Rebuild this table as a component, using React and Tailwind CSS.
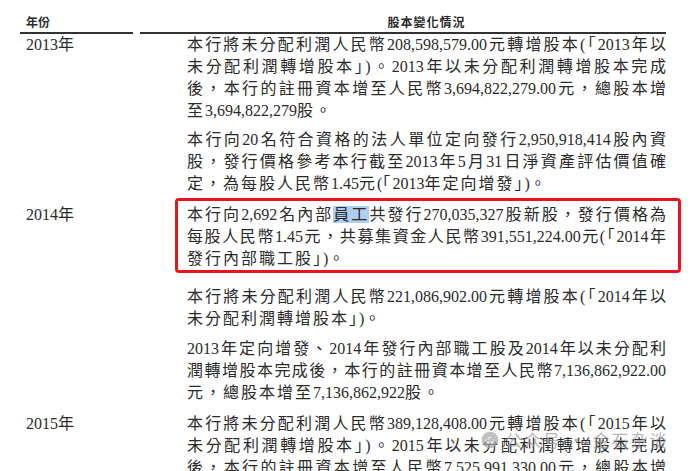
import React from "react";

const serif = "font-['Liberation_Serif','Noto_Sans_CJK_TC',serif]";

const rows = [
  {
    year: "2013年",
    paras: [
      {
        lines: [
          "本行將未分配利潤人民幣208,598,579.00元轉增股本(「2013年以",
          "未分配利潤轉增股本」)。2013年以未分配利潤轉增股本完成",
          "後，本行的註冊資本增至人民幣3,694,822,279.00元，總股本增",
          "至3,694,822,279股。",
        ],
      },
      {
        gap: "mt-[7px]",
        lines: [
          "本行向20名符合資格的法人單位定向發行2,950,918,414股內資",
          "股，發行價格參考本行截至2013年5月31日淨資產評估價值確",
          "定，為每股人民幣1.45元(「2013年定向增發」)。",
        ],
      },
    ],
  },
  {
    year: "2014年",
    boxed: true,
    paras: [
      {
        gap: "mt-[13px]",
        lines: [
          "本行將未分配利潤人民幣221,086,902.00元轉增股本(「2014年以",
          "未分配利潤轉增股本」)。",
        ],
      },
      {
        gap: "mt-[8px]",
        lines: [
          "2013年定向增發、2014年發行內部職工股及2014年以未分配利",
          "潤轉增股本完成後，本行的註冊資本增至人民幣7,136,862,922.00",
          "元，總股本增至7,136,862,922股。",
        ],
      },
    ],
  },
  {
    year: "2015年",
    paras: [
      {
        lines: [
          "本行將未分配利潤人民幣389,128,408.00元轉增股本(「2015年以",
          "未分配利潤轉增股本」)。2015年以未分配利潤轉增股本完成",
          "後，本行的註冊資本增至人民幣7,525,991,330.00元，總股本增",
        ],
      },
    ],
  },
];

// last lines are not justified: space out the CJK runs only, keep numbers tight
function spaced(text) {
  return text.split(/([0-9.,()]+)/).map((part, i) =>
    /^[0-9.,()]+$/.test(part) ? (
      <span key={i}>{part}</span>
    ) : (
      <span key={i} className="tracking-[2px]">
        {part}
      </span>
    )
  );
}

function Line({ children, last }) {
  if (last) {
    return <div className="h-[22px] whitespace-nowrap">{spaced(children)}</div>;
  }
  return (
    <div className="h-[22px] text-justify [text-align-last:justify]">
      {children}
    </div>
  );
}

function Para({ lines, gap, cut }) {
  return (
    <div className={gap}>
      {lines.map((l, i) => (
        <Line key={i} last={i === lines.length - 1 && !cut}>
          {l}
        </Line>
      ))}
    </div>
  );
}

function BoxedPara() {
  return (
    <div className="-ml-[12px] -mr-[15px] rounded-[4px] border-[3px] border-[#e8141c] pl-[9px] pr-[12px] pt-[3px]">
      <Line>
        本行向2,692名內部<span className="bg-[#b0cdf2]">員工</span>
        共發行270,035,327股新股，發行價格為
      </Line>
      <Line>每股人民幣1.45元，共募集資金人民幣391,551,224.00元(「2014年</Line>
      <Line last>發行內部職工股」)。</Line>
    </div>
  );
}

function Watermark() {
  return (
    <div className="pointer-events-none absolute left-[480px] top-[429px] flex items-center gap-[5px] text-[#9a9a9a] opacity-70">
      <svg width="20" height="20" viewBox="0 0 24 24" fill="none">
        <circle cx="12" cy="12" r="10" fill="#a8a8a8" />
        <path
          d="M7 13.5c1.2-3 4.5-4.6 7.2-3.4 1.6.7 2.6 2 2.8 3.6"
          stroke="#fff"
          strokeWidth="1.8"
          strokeLinecap="round"
        />
        <circle cx="9.5" cy="15" r="1.3" fill="#fff" />
        <circle cx="14.5" cy="15" r="1.3" fill="#fff" />
      </svg>
      <span className="font-['Noto_Sans_CJK_SC',sans-serif] text-[17px] tracking-[2px]">
        公众号 · 金石杂谈
      </span>
    </div>
  );
}

export default function App() {
  return (
    <div
      className={`relative h-[471px] w-[700px] overflow-hidden bg-white text-[16px] leading-[22px] text-[#2b2b2b] ${serif}`}
    >
      <div className="ml-[20px] w-[646px]">
        <div className="grid grid-cols-[113px_1fr] gap-x-[7px] pt-[16px]">
          <div className="border-b-2 border-[#333] pb-[2px] pl-[6px] text-[12px] font-bold leading-[14px]">
            年份
          </div>
          <div className="border-b-2 border-[#333] pb-[2px] pl-[47px] text-center text-[12px] font-bold leading-[14px] tracking-[1px]">
            股本變化情況
          </div>
        </div>

        {rows.map((row) => (
          <div
            key={row.year}
            className={`grid grid-cols-[113px_1fr] gap-x-[7px] ${
              row.boxed ? "mt-[3px]" : row.year === "2015年" ? "mt-[9px]" : ""
            }`}
          >
            <div className={`pl-[6px] ${row.boxed ? "pt-[6px]" : ""}`}>
              {row.year}
            </div>
            <div className="pl-[47px]">
              {row.boxed && <BoxedPara />}
              {row.paras.map((p, i) => (
                <Para
                  key={i}
                  lines={p.lines}
                  gap={p.gap}
                  cut={row.year === "2015年"}
                />
              ))}
            </div>
          </div>
        ))}
      </div>
      <Watermark />
    </div>
  );
}
